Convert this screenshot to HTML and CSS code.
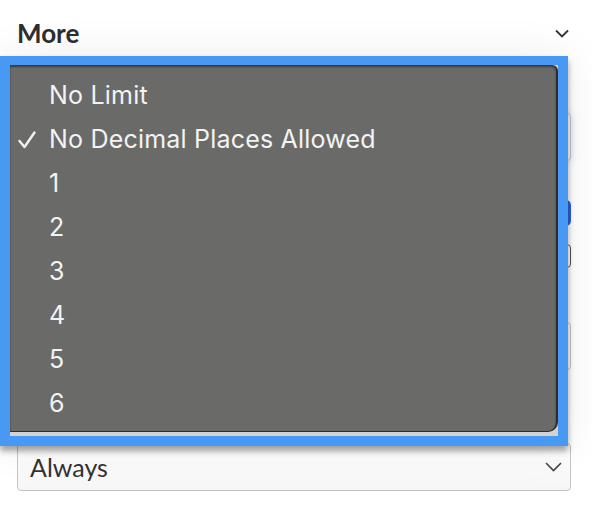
FILE: index.html
```html
<!DOCTYPE html>
<html>
<head>
<meta charset="utf-8">
<link rel="stylesheet" href="styles.css">
</head>
<body>
<div class="page">
  <header class="section-head">
    <span class="title">More</span>
    <svg class="chev" width="14" height="9" viewBox="0 0 14 9"><path d="M1 1.5 L7 7.5 L13 1.5" fill="none" stroke="#333" stroke-width="1.8"/></svg>
  </header>
  <form class="fields">
    <div class="input glow"></div>
    <div class="btn-blue"></div>
    <div class="check"></div>
    <div class="input second"></div>
    <div class="select">
      <span>Always</span>
      <svg width="17" height="10" viewBox="0 0 17 10"><path d="M1 1 L8.5 8.5 L16 1" fill="none" stroke="#444" stroke-width="1.6"/></svg>
    </div>
  </form>
  <div class="popup-frame">
    <ul class="menu">
      <li class="item">No Limit</li>
      <li class="item checked"><svg class="tick" width="18" height="18" viewBox="0 0 18 18"><path d="M1.5 10 L6.5 16 L16.5 1.5" fill="none" stroke="#f3f3f3" stroke-width="2.4" stroke-linecap="round" stroke-linejoin="round"/></svg>No Decimal Places Allowed</li>
      <li class="item">1</li>
      <li class="item">2</li>
      <li class="item">3</li>
      <li class="item">4</li>
      <li class="item">5</li>
      <li class="item">6</li>
    </ul>
  </div>
</div>
</body>
</html>
```
FILE: styles.css
```css
html, body {
  margin: 0;
  padding: 0;
  background: #fff;
}
.page {
  position: relative;
  width: 592px;
  height: 506px;
  overflow: hidden;
  padding: 0 21px 0 17px;
  box-sizing: border-box;
  font-family: Lato, "Open Sans", sans-serif;
}
.section-head {
  height: 66px;
  display: flex;
  align-items: center;
  justify-content: space-between;
}
.title {
  font-size: 26px;
  font-weight: 700;
  color: #2e2e2e;
}
.chev {
  margin-right: 2px;
}
.fields {
  display: flex;
  flex-direction: column;
  margin: 0;
}
.input {
  height: 48px;
  box-sizing: border-box;
  border: 1px solid #c8c8c8;
  border-radius: 4px;
  background: #fff;
  margin-top: 47px;
}
.input.glow {
  box-shadow: 0 0 8px rgba(80, 140, 230, 0.25);
}
.input.second {
  margin-top: 54px;
}
.btn-blue {
  height: 26px;
  margin-top: 39px;
  background: #2c63d8;
  border-radius: 5px;
}
.check {
  height: 24px;
  margin-top: 18px;
  box-sizing: border-box;
  border: 1.5px solid #555;
  border-radius: 4px;
}
.select {
  height: 48px;
  margin-top: 73px;
  box-sizing: border-box;
  border: 1px solid #c4c4c4;
  border-radius: 4px;
  background: linear-gradient(#fff, #f6f6f6);
  display: flex;
  align-items: center;
  justify-content: space-between;
  padding: 0 8px 0 12px;
  font-size: 25px;
  color: #333;
}
.popup-frame {
  position: absolute;
  left: 0;
  top: 56px;
  width: 568px;
  height: 390px;
  box-sizing: border-box;
  border: 10px solid #4799f4;
  border-top-width: 9px;
  background: #d2d2d2;
  padding-bottom: 4px;
  box-shadow: 0 5px 6px rgba(0, 0, 0, 0.35), 0 0 40px rgba(0, 0, 0, 0.08);
}
.menu {
  list-style: none;
  margin: 0;
  padding: 8px 0 7px 0;
  height: 100%;
  box-sizing: border-box;
  background: #6a6a69;
  border-right: 2px solid #2c2c2c;
  border-bottom: 1px solid #2c2c2c;
  border-radius: 0 6px 10px 0;
  box-shadow: inset 0 2px 2px rgba(0, 0, 0, 0.45);
  font-family: Inter, "Liberation Sans", sans-serif;
}
.item {
  height: 44px;
  display: flex;
  align-items: center;
  padding-left: 39px;
  position: relative;
  font-size: 25px;
  letter-spacing: 0.2px;
  color: #f3f3f3;
}
.tick {
  position: absolute;
  left: 8px;
  top: 14px;
}
```
